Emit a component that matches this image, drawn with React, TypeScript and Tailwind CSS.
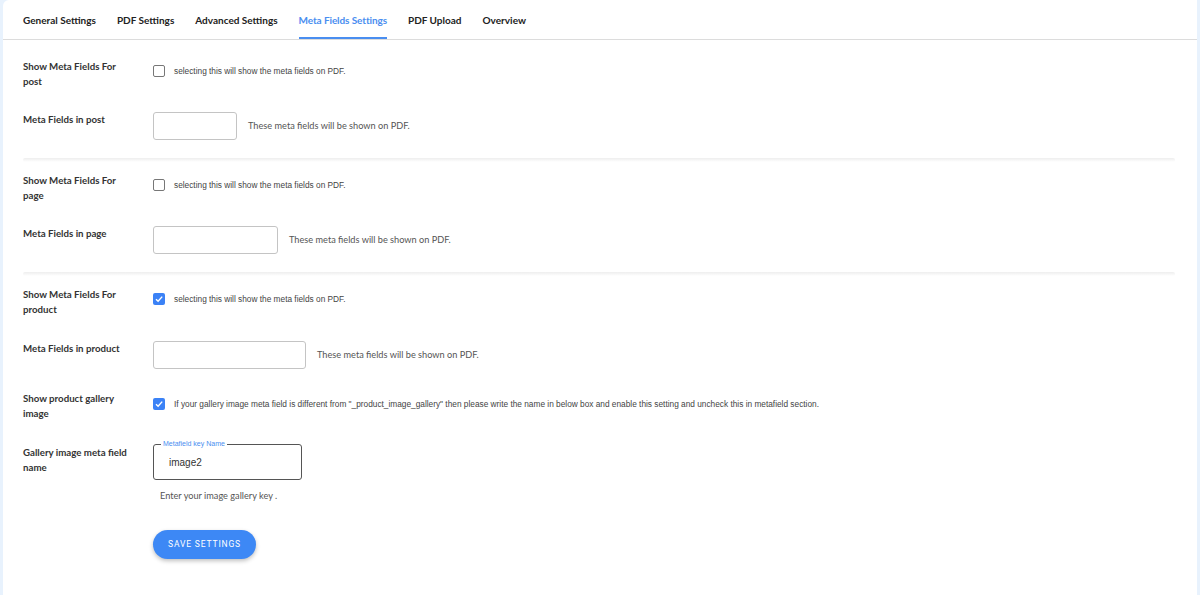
import React from "react";

const tabs = [
  "General Settings",
  "PDF Settings",
  "Advanced Settings",
  "Meta Fields Settings",
  "PDF Upload",
  "Overview",
];

const Checkbox = ({ checked }: { checked?: boolean }) =>
  checked ? (
    <div className="w-[12px] h-[12px] rounded-[2px] bg-[#3b82f6] flex items-center justify-center">
      <svg width="10" height="10" viewBox="0 0 10 10">
        <path d="M2 5.2 L4.1 7.3 L8.2 2.6" fill="none" stroke="white" strokeWidth="1.4" />
      </svg>
    </div>
  ) : (
    <div className="w-[12px] h-[12px] rounded-[2px] border border-[#777] bg-white" />
  );

const Label = ({ children }: { children: React.ReactNode }) => (
  <div className="w-[130px] shrink-0 pr-[6px] text-[9.7px] font-bold leading-[15px] text-[#333]">
    {children}
  </div>
);

const CheckRow = ({ label, checked, text }: { label: React.ReactNode; checked?: boolean; text: string }) => (
  <div className="flex">
    <Label>{label}</Label>
    <div className="flex items-center gap-[9px] mt-[6px] h-[12px]">
      <Checkbox checked={checked} />
      <span className="font-['Liberation_Sans',Arial,sans-serif] text-[8.3px] text-[#444]">{text}</span>
    </div>
  </div>
);

const InputRow = ({ label, width }: { label: string; width: string }) => (
  <div className="flex">
    <Label>{label}</Label>
    <div className="flex items-center gap-[11px]">
      <div className={`${width} h-[28px] border border-[#c4c4c4] rounded-[3px] bg-white`} />
      <span className="text-[9.2px] text-[#555]">These meta fields will be shown on PDF.</span>
    </div>
  </div>
);

const Divider = () => (
  <div className="h-[4px] mr-[22px] bg-[linear-gradient(to_bottom,#eeeeee,#f8f8f8_60%,#ffffff)] rounded-sm" />
);

export default function App() {
  return (
    <div className="bg-[#e8f2fd] h-[595px] pl-[3px] pr-[3px] font-['Lato','Open_Sans',sans-serif]">
      <div className="bg-white h-full rounded-tl-[6px] flex flex-col">
        <div className="h-[40px] border-b border-[#dcdcdc] flex items-stretch pl-[20px] gap-[21px]">
          {tabs.map((t) => (
            <div
              key={t}
              className={`flex items-center pt-[3px] text-[10px] font-bold border-b-2 ${
                t === "Meta Fields Settings"
                  ? "text-[#4a8ef0] border-[#4a8ef0] tracking-[-0.01em]"
                  : "text-[#222] border-transparent"
              }`}
            >
              {t}
            </div>
          ))}
        </div>

        <div className="pl-[20px] flex flex-col">
          <div className="mt-[19px]">
            <CheckRow label={<>Show Meta Fields For<br />post</>} text="selecting this will show the meta fields on PDF." />
          </div>
          <div className="mt-[23px]">
            <InputRow label="Meta Fields in post" width="w-[84px]" />
          </div>
          <div className="mt-[18px]">
            <Divider />
          </div>

          <div className="mt-[11px]">
            <CheckRow label={<>Show Meta Fields For<br />page</>} text="selecting this will show the meta fields on PDF." />
          </div>
          <div className="mt-[23px]">
            <InputRow label="Meta Fields in page" width="w-[125px]" />
          </div>
          <div className="mt-[18px]">
            <Divider />
          </div>

          <div className="mt-[11px]">
            <CheckRow label={<>Show Meta Fields For<br />product</>} checked text="selecting this will show the meta fields on PDF." />
          </div>
          <div className="mt-[24px]">
            <InputRow label="Meta Fields in product" width="w-[153px]" />
          </div>

          <div className="mt-[22px]">
            <div className="flex">
              <Label>Show product gallery<br />image</Label>
              <div className="flex items-center gap-[9px] mt-[7px] h-[12px]">
                <Checkbox checked />
                <span className="font-['Liberation_Sans',Arial,sans-serif] text-[8.3px] text-[#444]">
                  If your gallery image meta field is different from "_product_image_gallery" then please write the name in below box and enable this setting and uncheck this in metafield section.
                </span>
              </div>
            </div>
          </div>

          <div className="mt-[24px] flex">
            <Label>Gallery image meta field<br />name</Label>
            <div className="flex flex-col">
              <div className="relative w-[149px] h-[36px] border border-[#555] rounded-[3px] flex items-center pl-[15px] mt-[-1px]">
                <span className="absolute -top-[5px] left-[7px] bg-white px-[2px] text-[7px] leading-[8px] text-[#4a8ef0] font-['Liberation_Sans',Arial,sans-serif]">
                  Metafield key Name
                </span>
                <span className="text-[10px] text-[#333] font-['Liberation_Sans',Arial,sans-serif]">image2</span>
              </div>
              <span className="mt-[9px] ml-[7px] text-[9.2px] text-[#555]">Enter your image gallery key .</span>
              <button className="mt-[27px] w-[103px] h-[29px] rounded-full bg-[#3d88f5] text-white text-[8.5px] tracking-[0.1em] font-['Roboto',sans-serif] font-normal shadow-[0_2px_4px_rgba(0,0,0,0.25)]">
                SAVE SETTINGS
              </button>
            </div>
          </div>
        </div>
      </div>
    </div>
  );
}
